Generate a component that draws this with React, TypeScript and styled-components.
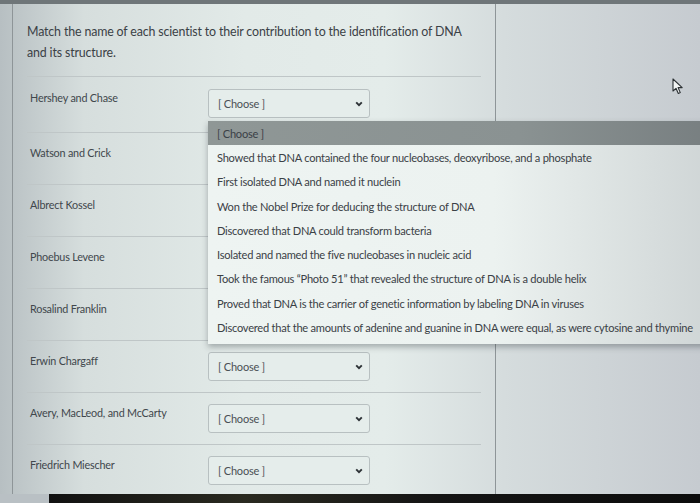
import { createGlobalStyle, styled } from "styled-components";

const GlobalStyle = createGlobalStyle`
  html, body {
    margin: 0;
    padding: 0;
  }
  body {
    font-family: Lato, "Open Sans", sans-serif;
    color: #3b4146;
  }
`;

const Page = styled.div`
  position: relative;
  width: 700px;
  height: 503px;
  overflow: hidden;
  display: flex;
  flex-direction: column;
  background: linear-gradient(
    90deg,
    #b7bfc2 0%,
    #d6dedd 12%,
    #e2eae8 35%,
    #e4ecea 55%,
    #d5dcdd 72%,
    #c6cbd0 100%
  );
`;

const TopBar = styled.div`
  height: 4px;
  background: #6f7679;
  flex-shrink: 0;
`;

const Main = styled.div`
  flex: 1;
  display: flex;
  min-height: 0;
`;

const Gutter = styled.div`
  width: 12px;
  flex-shrink: 0;
`;

const Card = styled.div`
  width: 484px;
  flex-shrink: 0;
  border-left: 1px solid #8e9598;
  border-right: 1px solid #8e9598;
  padding: 0 14px 0 14px;
  box-sizing: border-box;
  display: flex;
  flex-direction: column;
`;

const Side = styled.div`
  flex: 1;
  position: relative;
`;

const Question = styled.p`
  margin: 0;
  padding: 17px 0 13px;
  font-size: 12.4px;
  line-height: 21px;
  letter-spacing: -0.15px;
  border-bottom: 1px solid #bfc6c7;
`;

const Row = styled.div<{ $first?: boolean; $last?: boolean }>`
  display: flex;
  align-items: flex-start;
  padding: ${(p) => (p.$first ? "12px 0 14px" : "11px 0 11px")};
  border-bottom: ${(p) => (p.$last ? "none" : "1px solid #bfc6c7")};
`;

const Label = styled.div`
  width: 178px;
  flex-shrink: 0;
  font-size: 10.8px;
  letter-spacing: -0.2px;
  padding: 2px 0 0 3px;
  color: #41474c;
`;

const SelectWrap = styled.div`
  position: relative;
`;

const Select = styled.div<{ $hidden?: boolean }>`
  width: 162px;
  height: 29px;
  box-sizing: border-box;
  border: 1px solid #b8c0c1;
  border-radius: 3px;
  background: #e5edeb;
  display: flex;
  align-items: center;
  justify-content: space-between;
  padding: 0 6px 0 9px;
  font-size: 11px;
  letter-spacing: -0.2px;
  color: #4a5055;
  visibility: ${(p) => (p.$hidden ? "hidden" : "visible")};
`;

const Menu = styled.div`
  position: absolute;
  top: 32px;
  left: 0;
  width: 520px;
  z-index: 2;
  background: linear-gradient(90deg, #eef4f2 0%, #ecf2f0 55%, #cdd3d4 100%);
  box-shadow: 0 3px 6px rgba(40, 50, 55, 0.35);
  padding-bottom: 4px;
`;

const MenuItem = styled.div<{ $active?: boolean }>`
  height: 24.3px;
  display: flex;
  align-items: center;
  padding-left: 9px;
  font-size: 11.1px;
  letter-spacing: -0.25px;
  white-space: nowrap;
  color: #3b4146;
  background: ${(p) =>
    p.$active ? "linear-gradient(90deg, #8f9796 0%, #8a9292 60%, #767d7f 100%)" : "transparent"};
`;

const BottomBar = styled.div`
  height: 9px;
  flex-shrink: 0;
  display: flex;
`;

const BottomLeft = styled.div`
  width: 49px;
  background: #b9c0c4;
`;

const BottomDark = styled.div`
  flex: 1;
  background: linear-gradient(90deg, #111 0%, #2a2a20 30%, #141414 60%, #0c0c0c 100%);
`;

const Cursor = styled.svg`
  position: absolute;
  left: 176px;
  top: 74px;
`;

const Chevron = () => (
  <svg width="8" height="6" viewBox="0 0 8 6">
    <path d="M1.2 1.4 L4 4.2 L6.8 1.4" fill="none" stroke="#2d3236" strokeWidth="1.9" />
  </svg>
);

const options = [
  "Showed that DNA contained the four nucleobases, deoxyribose, and a phosphate",
  "First isolated DNA and named it nuclein",
  "Won the Nobel Prize for deducing the structure of DNA",
  "Discovered that DNA could transform bacteria",
  "Isolated and named the five nucleobases in nucleic acid",
  "Took the famous \u201cPhoto 51\u201d that revealed the structure of DNA is a double helix",
  "Proved that DNA is the carrier of genetic information by labeling DNA in viruses",
  "Discovered that the amounts of adenine and guanine in DNA were equal, as were cytosine and thymine",
];

const scientists = [
  "Hershey and Chase",
  "Watson and Crick",
  "Albrect Kossel",
  "Phoebus Levene",
  "Rosalind Franklin",
  "Erwin Chargaff",
  "Avery, MacLeod, and McCarty",
  "Friedrich Miescher",
];

export default function App() {
  return (
    <>
      <GlobalStyle />
      <Page>
        <TopBar />
        <Main>
          <Gutter />
          <Card>
            <Question>
              Match the name of each scientist to their contribution to the identification of DNA
              <br />
              and its structure.
            </Question>
            {scientists.map((name, i) => (
              <Row key={name} $first={i === 0} $last={i === scientists.length - 1}>
                <Label>{name}</Label>
                <SelectWrap>
                  {/* rows 2-5 sit under the open menu */}
                  <Select $hidden={i > 0 && i < 5}>
                    <span>[ Choose ]</span>
                    <Chevron />
                  </Select>
                  {i === 0 && (
                    <Menu>
                      <MenuItem $active>[ Choose ]</MenuItem>
                      {options.map((o) => (
                        <MenuItem key={o}>{o}</MenuItem>
                      ))}
                    </Menu>
                  )}
                </SelectWrap>
              </Row>
            ))}
          </Card>
          <Side>
            <Cursor width="13" height="17" viewBox="0 0 13 17">
              <path
                d="M1 1 L1 13 L4 10.3 L6.3 15.5 L8.3 14.6 L6.1 9.6 L10.2 9.6 Z"
                fill="#f2f5f5"
                stroke="#2b3033"
                strokeWidth="1.1"
                strokeLinejoin="round"
              />
            </Cursor>
          </Side>
        </Main>
        <BottomBar>
          <BottomLeft />
          <BottomDark />
        </BottomBar>
      </Page>
    </>
  );
}
